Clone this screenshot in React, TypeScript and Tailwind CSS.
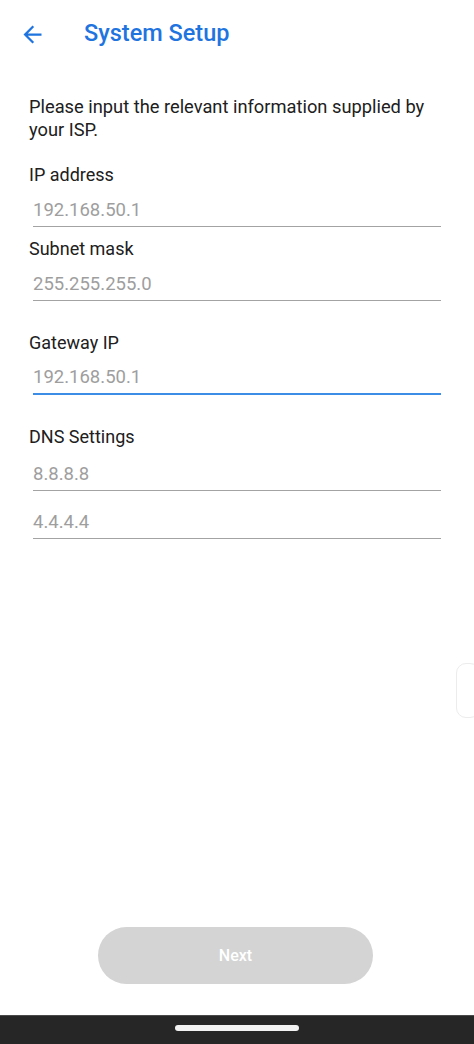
import React from 'react';

const font = { fontFamily: 'Roboto, "Noto Sans", sans-serif' };

function Field({
  label,
  values,
  focused,
  spaced,
  loose,
}: {
  label: string;
  values: string[];
  focused?: boolean;
  spaced?: boolean;
  loose?: boolean;
}) {
  return (
    <div className={spaced ? 'mt-[30px]' : 'mt-[10px]'}>
      <div className="text-[18px] leading-[24px] text-[#202020]">{label}</div>
      {values.map((v, i) => (
        <div
          key={v + i}
          className={
            (i > 0 ? 'mt-[16px] ' : loose ? 'mt-[10px] ' : 'mt-[8px] ') +
            'ml-[4px] flex h-[32px] items-center ' +
            (focused ? 'border-b-2 border-[#3b8de6]' : 'border-b border-[#a3a3a3]')
          }
        >
          <span className="text-[18.5px] text-[#9e9e9e]">{v}</span>
        </div>
      ))}
    </div>
  );
}

export default function App() {
  return (
    <div style={font} className="relative flex h-screen w-full flex-col overflow-hidden bg-white">
      {/* Header */}
      <div className="flex h-[68px] items-center">
        <svg
          viewBox="0 0 24 24"
          className="ml-[19px] h-[27px] w-[27px] fill-[#1f74df]"
        >
          <path d="M20 11H7.83l5.59-5.59L12 4l-8 8 8 8 1.41-1.41L7.83 13H20v-2z" />
        </svg>
        <h1 className="ml-[38px] text-[23.5px] font-medium text-[#1f74df]">System Setup</h1>
      </div>

      {/* Form */}
      <div className="pl-[29px] pr-[33px]">
        <p className="mt-[27px] text-[18.3px] leading-[23px] text-[#202020]">
          Please input the relevant information supplied by your ISP.
        </p>
        <div className="mt-[22px]">
          <Field label="IP address" values={['192.168.50.1']} />
          <Field label="Subnet mask" values={['255.255.255.0']} />
          <Field label="Gateway IP" values={['192.168.50.1']} focused spaced />
          <Field label="DNS Settings" values={['8.8.8.8', '4.4.4.4']} spaced loose />
        </div>
      </div>

      <div className="flex-1" />

      {/* Next button */}
      <div className="mb-[31px] flex justify-center pr-[3px]">
        <button className="h-[57px] w-[275px] rounded-full bg-[#d4d4d4] text-[16px] font-medium text-white">
          Next
        </button>
      </div>

      {/* System nav bar */}
      <div className="flex h-[29px] items-start justify-center border-t border-[#4a4a4a] bg-[#262626]">
        <div className="mt-[9px] h-[6px] w-[124px] rounded-full bg-[#f2f2f2]" />
      </div>

      {/* Edge handle */}
      <div className="absolute right-[-6px] top-[663px] h-[55px] w-[24px] rounded-[10px] border border-[#ececec]" />
    </div>
  );
}
